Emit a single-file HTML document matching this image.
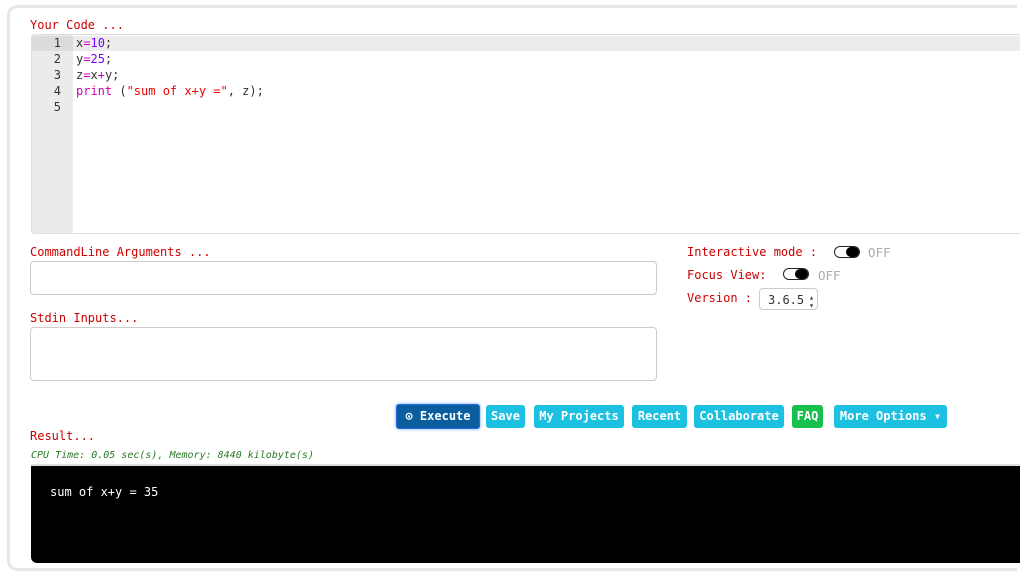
<!DOCTYPE html>
<html style="margin:0;width:1020px;height:571px;overflow:hidden"><head><style>
body{margin:0;width:1020px;height:571px;background:#fff;overflow:hidden;position:relative;font-family:"DejaVu Sans Mono","Liberation Mono",monospace;font-size:12px}
.card{position:absolute;left:7px;top:5px;width:1007px;height:560px;border:3px solid #e6e6e6;border-right:none;border-radius:10px 0 0 10px;background:#fff}
.lbl{position:absolute;color:#c00;font-size:12px}
.ed{position:absolute;left:31px;top:34px;width:988px;height:198px;border:1px solid #ddd;border-right:none;border-radius:4px 0 0 4px;background:#fff;overflow:hidden}
.gut{position:absolute;left:0;top:0;width:41px;height:100%;background:#ebebeb}
.hl{position:absolute;left:0;top:1px;width:100%;height:15px;background:#ececec}
.hlg{position:absolute;left:0;top:1px;width:41px;height:15px;background:#dcdcdc}
.ln{position:absolute;left:0;width:29px;text-align:right;color:#333}
.cd{position:absolute;left:44px;color:#333;white-space:pre}
.n{color:#70f}.o{color:#c0c}.s{color:#e00}.k{color:#c0a}
.inp{position:absolute;border:1px solid #ccc;border-radius:4px;background:#fff}
.btn{position:absolute;top:405px;height:23px;line-height:23px;border-radius:3px;color:#fff;font-weight:bold;font-size:12px;text-align:center;background:#1cc0e0;white-space:nowrap;overflow:hidden}
.tog{position:absolute;width:24px;height:10px;border:1px solid #222;border-radius:6px;background:#fff}
.tog:after{content:"";position:absolute;right:0;top:0;width:13px;height:10px;border-radius:6px;background:#000}
.off{position:absolute;color:#aaa;font-size:12.5px}
</style></head><body>
<div class="card"></div>
<div class="lbl" style="left:30px;top:18px">Your Code ...</div>
<div class="ed">
<div class="hl"></div><div class="gut"></div><div class="hlg"></div>
<div class="ln" style="top:1px">1</div><div class="ln" style="top:17px">2</div><div class="ln" style="top:33px">3</div><div class="ln" style="top:49px">4</div><div class="ln" style="top:65px">5</div>
<div class="cd" style="top:1px">x<span class="o">=</span><span class="n">10</span>;</div>
<div class="cd" style="top:17px">y<span class="o">=</span><span class="n">25</span>;</div>
<div class="cd" style="top:33px">z<span class="o">=</span>x<span class="o">+</span>y;</div>
<div class="cd" style="top:49px"><span class="k">print</span> (<span class="s">"sum of x+y ="</span>, z);</div>
</div>
<div class="lbl" style="left:30px;top:245px">CommandLine Arguments ...</div>
<div class="inp" style="left:30px;top:261px;width:625px;height:32px"></div>
<div class="lbl" style="left:30px;top:311px">Stdin Inputs...</div>
<div class="inp" style="left:30px;top:327px;width:625px;height:52px"></div>
<div class="lbl" style="left:687px;top:245px">Interactive mode :</div>
<div class="tog" style="left:834px;top:246px"></div><div class="off" style="left:868px;top:245px">OFF</div>
<div class="lbl" style="left:687px;top:268px">Focus View:</div>
<div class="tog" style="left:783px;top:268px"></div><div class="off" style="left:818px;top:268px">OFF</div>
<div class="lbl" style="left:687px;top:291px">Version :</div>
<div class="inp" style="left:759px;top:288px;width:59px;height:22px;line-height:22px;color:#333;font-size:12px;padding-left:8px;box-sizing:border-box;white-space:nowrap">3.6.5<span style="position:absolute;right:3px;top:-1px;font-size:8px;line-height:8px;display:inline-block;padding-top:6px">&#x25B4;<br>&#x25BE;</span></div>
<div class="btn" style="left:396px;width:82px;background:#0a5e9e;border:1px solid #2a6ae0;box-shadow:0 0 3px #6af;top:404px">&#x2299; Execute</div>
<div class="btn" style="left:486px;width:39px">Save</div>
<div class="btn" style="left:534px;width:90px">My Projects</div>
<div class="btn" style="left:632px;width:55px">Recent</div>
<div class="btn" style="left:694px;width:90px">Collaborate</div>
<div class="btn" style="left:792px;width:31px;background:#17bf4c">FAQ</div>
<div class="btn" style="left:834px;width:113px">More Options &#x25BE;</div>
<div class="lbl" style="left:30px;top:429px">Result...</div>
<div style="position:absolute;left:31px;top:450px;color:#2a7a2a;font-style:italic;font-size:10px">CPU Time: 0.05 sec(s), Memory: 8440 kilobyte(s)</div>
<div style="position:absolute;left:31px;top:464px;width:989px;height:97px;background:#000;border-radius:0 0 0 6px;border-top:2px solid #ddd"></div>
<div style="position:absolute;left:50px;top:485px;color:#fff;font-size:12px">sum of x+y = 35</div>
</body></html>
